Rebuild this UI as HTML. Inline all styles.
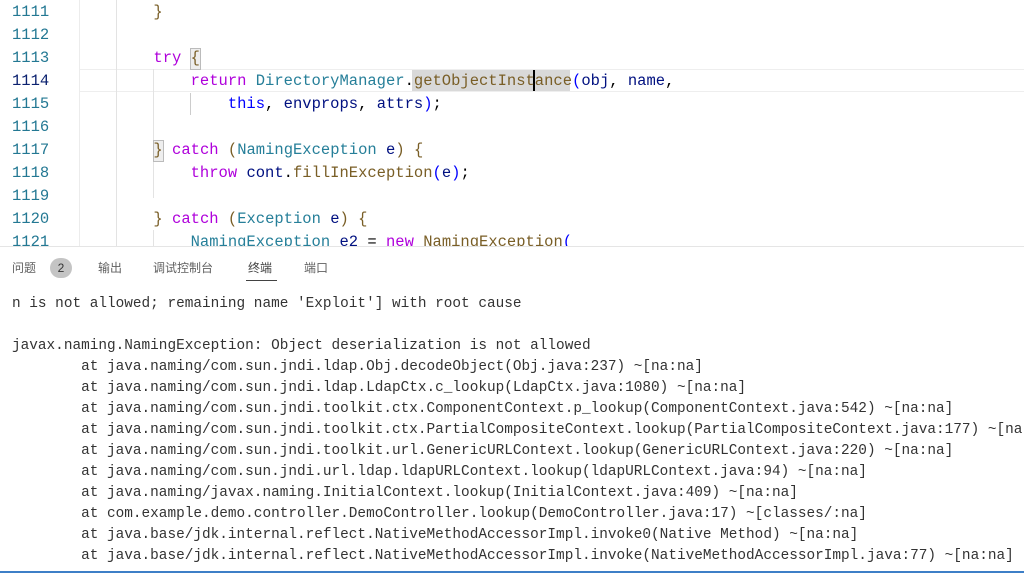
<!DOCTYPE html><html><head><meta charset="utf-8"><style>
body{margin:0;width:1024px;height:572px;overflow:hidden;background:#fff;position:relative;font-family:"Liberation Mono",monospace}
.ed{position:absolute;left:0;top:0;width:1024px;height:246px;overflow:hidden}
.ln{position:absolute;left:12px;width:50px;font-size:15.5px;color:#237893;line-height:23px}
.cl{position:absolute;left:79px;font-size:15.5px;line-height:23px;white-space:pre;color:#001080}
.k{color:#af00db}.t{color:#267f99}.f{color:#795e26}.b{color:#0000ff}.p{color:#000}.br{color:#795e26}
.g{position:absolute;width:1px;background:#e3e3e3}
.panel{position:absolute;left:0;top:246px;width:1024px;height:326px;border-top:1px solid #e5e5e5;font-family:"Liberation Sans","Noto Sans CJK SC",sans-serif}
.tab{position:absolute;top:12px;font-size:12px;color:#616161}
.term{position:absolute;left:12px;font-size:14.4px;line-height:21px;white-space:pre;color:#333;font-family:"Liberation Mono",monospace}
</style></head><body>
<div class="ed">
<div style="position:absolute;left:79px;top:69px;width:945px;height:21px;border-top:1px solid #eee;border-bottom:1px solid #eee"></div>
<div class="g" style="left:79px;top:0;height:246px;background:#ececec"></div>
<div class="g" style="left:116px;top:0;height:246px"></div>
<div class="g" style="left:153px;top:69px;height:129px"></div>
<div class="g" style="left:153px;top:230px;height:16px"></div>
<div class="g" style="left:190px;top:93px;height:22px;background:#ccc"></div>
<div style="position:absolute;left:412px;top:70px;width:158px;height:21px;background:#d9d9d9"></div>
<div style="position:absolute;left:533px;top:70px;width:2px;height:21px;background:#000"></div>
<div style="position:absolute;left:190px;top:48px;width:9px;height:20px;border:1px solid #bbb;background:#eee"></div>
<div style="position:absolute;left:153px;top:140px;width:9px;height:20px;border:1px solid #bbb;background:#eee"></div>
<div class="ln" style="top:1px">1111<br>1112<br>1113<br><span style="color:#0b216f">1114</span><br>1115<br>1116<br>1117<br>1118<br>1119<br>1120<br>1121</div>
<div class="cl" style="top:1px"><span class="br">        }</span>

        <span class="k">try</span> <span class="br">{</span>
            <span class="k">return</span> <span class="t">DirectoryManager</span><span class="p">.</span><span class="f">getObjectInstance</span><span class="b">(</span>obj<span class="p">,</span> name<span class="p">,</span>
                <span class="b">this</span><span class="p">,</span> envprops<span class="p">,</span> attrs<span class="b">)</span><span class="p">;</span>

        <span class="br">}</span> <span class="k">catch</span> <span class="br">(</span><span class="t">NamingException</span> e<span class="br">)</span> <span class="br">{</span>
            <span class="k">throw</span> cont<span class="p">.</span><span class="f">fillInException</span><span class="b">(</span>e<span class="b">)</span><span class="p">;</span>

        <span class="br">}</span> <span class="k">catch</span> <span class="br">(</span><span class="t">Exception</span> e<span class="br">)</span> <span class="br">{</span>
            <span class="t">NamingException</span> e2 <span class="p">=</span> <span class="k">new</span> <span class="f">NamingException</span><span class="b">(</span></div>
</div>
<div class="panel">
<div class="tab" style="left:12px">问题</div>
<div style="position:absolute;left:50px;top:11px;width:22px;height:20px;border-radius:10px;background:#c4c4c4;color:#333;font-size:12px;text-align:center;line-height:20px">2</div>
<div class="tab" style="left:98px">输出</div>
<div class="tab" style="left:153px">调试控制台</div>
<div class="tab" style="left:248px;color:#424242">终端</div>
<div style="position:absolute;left:246px;top:33px;width:31px;height:1px;background:#424242"></div>
<div class="tab" style="left:304px">端口</div>
<div class="term" style="top:47px">n is not allowed; remaining name 'Exploit'] with root cause

javax.naming.NamingException: Object deserialization is not allowed
        at java.naming/com.sun.jndi.ldap.Obj.decodeObject(Obj.java:237) ~[na:na]
        at java.naming/com.sun.jndi.ldap.LdapCtx.c_lookup(LdapCtx.java:1080) ~[na:na]
        at java.naming/com.sun.jndi.toolkit.ctx.ComponentContext.p_lookup(ComponentContext.java:542) ~[na:na]
        at java.naming/com.sun.jndi.toolkit.ctx.PartialCompositeContext.lookup(PartialCompositeContext.java:177) ~[na:na]
        at java.naming/com.sun.jndi.toolkit.url.GenericURLContext.lookup(GenericURLContext.java:220) ~[na:na]
        at java.naming/com.sun.jndi.url.ldap.ldapURLContext.lookup(ldapURLContext.java:94) ~[na:na]
        at java.naming/javax.naming.InitialContext.lookup(InitialContext.java:409) ~[na:na]
        at com.example.demo.controller.DemoController.lookup(DemoController.java:17) ~[classes/:na]
        at java.base/jdk.internal.reflect.NativeMethodAccessorImpl.invoke0(Native Method) ~[na:na]
        at java.base/jdk.internal.reflect.NativeMethodAccessorImpl.invoke(NativeMethodAccessorImpl.java:77) ~[na:na]</div>
<div style="position:absolute;left:0;top:324px;width:1024px;height:2px;background:#3d7fc7"></div>
</div>
</body></html>
